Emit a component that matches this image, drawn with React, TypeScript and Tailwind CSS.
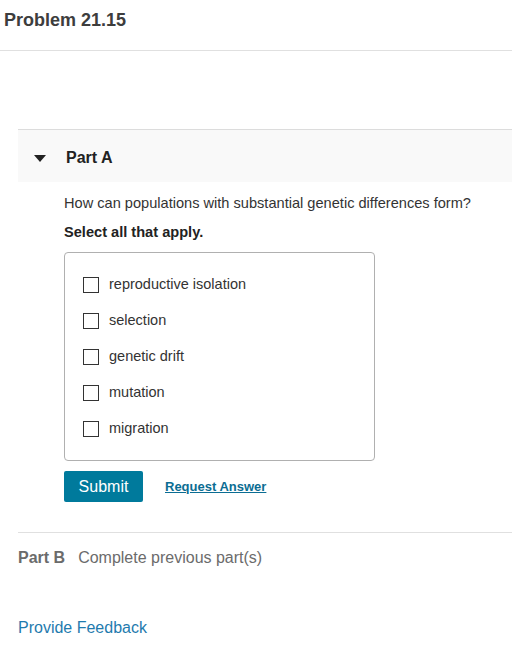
const options = [
  'reproductive isolation',
  'selection',
  'genetic drift',
  'mutation',
  'migration',
]

export default function App() {
  return (
    <div className="min-h-[671px] w-[512px] bg-white font-['Liberation_Sans',Arial,sans-serif] text-[#333]">
      <div className="h-[51px] border-b border-[#e0e0e0] pl-[4px] pt-[9px]">
        <h1 className="text-[18px] font-bold leading-[22px] text-[#3d3d3d]">Problem 21.15</h1>
      </div>

      <div className="ml-[18px] mt-[78px]">
        <div className="flex h-[53px] items-center border-t border-[#dcdcdc] bg-[#f9f9f9] pt-[3px]">
          <svg width="12" height="7" viewBox="0 0 12 7" className="ml-[16px] mt-[1px]">
            <path d="M0 0 H12 L6 7 Z" fill="#222" />
          </svg>
          <span className="ml-[20px] text-[16px] font-bold text-[#222]">Part A</span>
        </div>

        <div className="pl-[46px] pt-[12px]">
          <p className="text-[14.6px] leading-[18px] text-[#333]">
            How can populations with substantial genetic differences form?
          </p>
          <p className="mt-[11px] text-[14.6px] font-bold leading-[18px] text-[#222]">Select all that apply.</p>

          <div className="mt-[11px] flex w-[311px] flex-col gap-[16px] rounded-[4px] border border-[#b0b0b0] px-[18px] pb-[21px] pt-[22px]">
            {options.map((o) => (
              <label key={o} className="flex h-[20px] items-center">
                <span className="h-[16px] w-[16px] border border-[#333] bg-white" />
                <span className="ml-[10px] text-[14.5px] text-[#333]">{o}</span>
              </label>
            ))}
          </div>

          <div className="mt-[10px] flex items-center">
            <button className="h-[31px] w-[79px] rounded-[2px] bg-[#007a9c] text-[16px] text-white">Submit</button>
            <a className="ml-[22px] text-[13px] font-bold text-[#0b6d93] underline">Request Answer</a>
          </div>
        </div>

        <div className="mt-[30px] border-t border-[#e0e0e0] pt-[15px]">
          <p className="text-[16px] leading-[20px]">
            <span className="font-bold text-[#6b6b6b]">Part B</span>
            <span className="ml-[13px] text-[#6b6b6b]">Complete previous part(s)</span>
          </p>
        </div>

        <a className="mt-[50px] block text-[16px] leading-[20px] text-[#1f7bae]">Provide Feedback</a>
      </div>
    </div>
  )
}
